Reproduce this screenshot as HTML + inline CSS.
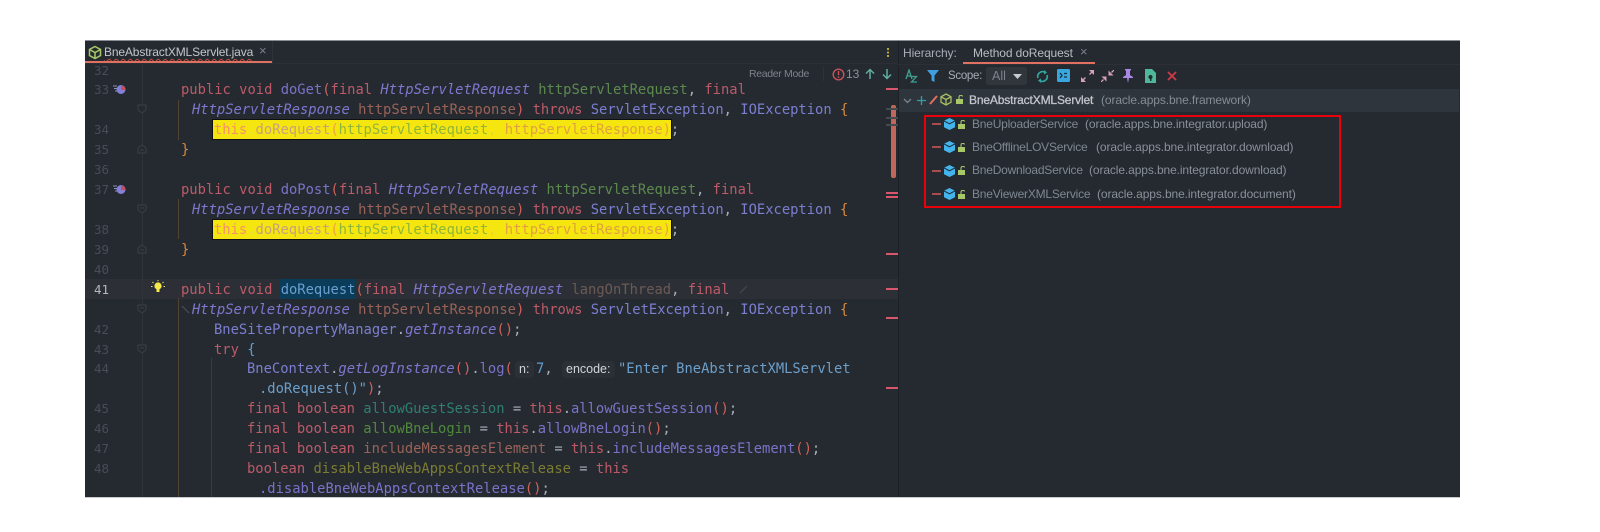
<!DOCTYPE html>
<html><head><meta charset="utf-8"><style>
html,body{margin:0;padding:0;background:#fff}
body{width:1600px;height:532px;position:relative;overflow:hidden}
#app{position:absolute;left:85px;top:41px;width:1375px;height:456px;background:#252a30;overflow:hidden}
#wrap{position:absolute;left:0;top:0;width:1600px;height:532px}
.a{position:absolute}
.c{position:absolute;white-space:pre;font:13.8px/20px "DejaVu Sans Mono","Liberation Mono",monospace;height:20px;color:#8b93a0}
.n{position:absolute;left:85px;width:24px;text-align:right;font:12.5px/20px "DejaVu Sans Mono",monospace;color:#474d57;height:20px}
.u{position:absolute;white-space:pre;font:12px/20px "Liberation Sans",sans-serif;height:20px}
.k{color:#bd5a68}.m{color:#7a72c8}.t{color:#7d77cf;font-style:italic}.p{color:#d2605a}.g{color:#5c8a4e}.r{color:#9a6258}
.w{color:#aab0ba}.b{color:#d88a3c}.y{color:#7c7ed0}.s{color:#6c9fca}.q{color:#5d9ed2}
.mk{position:absolute;left:886px;width:12px;height:2px;background:#d9566c}
.mg{position:absolute;left:886px;width:12px;height:2px;background:#414b50}
.tr{position:absolute;white-space:pre;font:12px/20px "Liberation Sans",sans-serif;height:20px;color:#8a909a;letter-spacing:-.11px}
.nm{color:#7f8791;letter-spacing:-.22px}
</style></head><body>
<div id="wrap">
<div class="a" style="left:85px;top:40px;width:1375px;height:1px;background:#8a8e94"></div>
<div class="a" style="left:85px;top:497px;width:1375px;height:1px;background:#c8cacd"></div>
<div class="a" style="left:1459px;top:41px;width:1px;height:456px;background:#4a5058"></div>
<div id="app"></div>

<!-- highlighted current line -->
<div class="a" style="left:85px;top:279px;width:813px;height:20px;background:#2c3036"></div>
<!-- gutter guides -->
<div class="a" style="left:142px;top:64px;width:1px;height:433px;background:#2f343b"></div>
<div class="a" style="left:178px;top:100px;width:1px;height:40px;background:#51432f"></div>
<div class="a" style="left:178px;top:199px;width:1px;height:40px;background:#51432f"></div>
<div class="a" style="left:178px;top:298px;width:1px;height:199px;background:#51432f"></div>
<div class="a" style="left:211px;top:358px;width:1px;height:139px;background:#323e4a"></div>

<!-- tab strip -->
<svg class="a" style="left:88px;top:45px" width="14" height="15" viewBox="0 0 14 15"><path d="M7 1.500l5.500 3v6L7 13.500l-5.500-3v-6zM1.500 4.500L7 7.500l5.500-3M7 7.500v6" fill="none" stroke="#a8c868" stroke-width="1.500"/></svg>
<div class="u" style="left:104px;top:42px;color:#c2c6cc;letter-spacing:-.14px;text-decoration:underline wavy #c0503f 1px;text-underline-offset:2px">BneAbstractXMLServlet.java</div>
<div class="u" style="left:259px;top:41px;color:#7c828b;font-size:13px">×</div>
<div class="a" style="left:85px;top:61px;width:188px;height:2px;background:#e0705f"></div>
<div class="a" style="left:272px;top:41px;width:1px;height:22px;background:#2f343b"></div>
<div class="a" style="left:85px;top:63px;width:813px;height:1px;background:#2c3036"></div>

<!-- reader mode bar -->
<div class="u" style="left:749px;top:64px;color:#7d838c;font-size:10.500px;letter-spacing:-.33px">Reader Mode</div>
<div class="a" style="left:823px;top:67px;width:1px;height:14px;background:#2f343b"></div>
<svg class="a" style="left:832px;top:68px" width="13" height="13" viewBox="0 0 13 13"><circle cx="6.500" cy="6.500" r="5.300" fill="none" stroke="#c8525a" stroke-width="1.400"/><path d="M6.500 3v4.200M6.500 8.500v1.500" stroke="#c8525a" stroke-width="1.400"/></svg>
<div class="u" style="left:846px;top:64px;color:#8b929b">13</div>
<svg class="a" style="left:864px;top:68px" width="12" height="12" viewBox="0 0 12 12"><path d="M6 11V2M2 5.500L6 1.500l4 4" fill="none" stroke="#5fae9e" stroke-width="1.500"/></svg>
<svg class="a" style="left:881px;top:68px" width="12" height="12" viewBox="0 0 12 12"><path d="M6 1v9M2 6.500L6 10.500l4-4" fill="none" stroke="#5fae9e" stroke-width="1.500"/></svg>

<!-- line numbers -->
<div class="n" style="top:61px">32</div>
<div class="n" style="top:80px">33</div>
<div class="n" style="top:120px">34</div>
<div class="n" style="top:140px">35</div>
<div class="n" style="top:160px">36</div>
<div class="n" style="top:180px">37</div>
<div class="n" style="top:220px">38</div>
<div class="n" style="top:240px">39</div>
<div class="n" style="top:260px">40</div>
<div class="n" style="top:280px;color:#b4b8be">41</div>
<div class="n" style="top:320px">42</div>
<div class="n" style="top:340px">43</div>
<div class="n" style="top:359px">44</div>
<div class="n" style="top:399px">45</div>
<div class="n" style="top:419px">46</div>
<div class="n" style="top:439px">47</div>
<div class="n" style="top:459px">48</div>

<!-- gutter icons -->
<svg class="a" style="left:113px;top:83px" width="13" height="12" viewBox="0 0 13 12"><path d="M0 3h4M1 5.500h3M2 8h2" stroke="#8a92c0" stroke-width="1"/><circle cx="8" cy="6.500" r="4.500" fill="#8480d8"/><path d="M8 2l4 2.500V7H8z" fill="#c8505c"/></svg>
<svg class="a" style="left:113px;top:183px" width="13" height="12" viewBox="0 0 13 12"><path d="M0 3h4M1 5.500h3M2 8h2" stroke="#8a92c0" stroke-width="1"/><circle cx="8" cy="6.500" r="4.500" fill="#8480d8"/><path d="M8 2l4 2.500V7H8z" fill="#c8505c"/></svg>
<svg class="a" style="left:151px;top:280px" width="14" height="15" viewBox="0 0 14 15"><circle cx="7" cy="6" r="3.600" fill="#f7e84a"/><rect x="5.500" y="9" width="3" height="3" fill="#f7e84a"/><path d="M7 0v1.300M1.500 2l1 1M12.500 2l-1 1M0 6.500h1.500M12.500 6.500H14" stroke="#e8dc60" stroke-width="1"/></svg>
<!-- fold marks -->
<svg class="a" style="left:137px;top:104px" width="10" height="10"><path d="M1 1h8v5l-4 3-4-3z" fill="#252a30" stroke="#3a3f46"/></svg>
<svg class="a" style="left:137px;top:144px" width="10" height="10"><path d="M1 9h8V4L5 1 1 4z" fill="#252a30" stroke="#3a3f46"/><path d="M3 6h4" stroke="#3a3f46"/></svg>
<svg class="a" style="left:137px;top:204px" width="10" height="10"><path d="M1 1h8v5l-4 3-4-3z" fill="#252a30" stroke="#3a3f46"/><path d="M3 4h4" stroke="#3a3f46"/></svg>
<svg class="a" style="left:137px;top:244px" width="10" height="10"><path d="M1 9h8V4L5 1 1 4z" fill="#252a30" stroke="#3a3f46"/><path d="M3 6h4" stroke="#3a3f46"/></svg>
<svg class="a" style="left:137px;top:304px" width="10" height="10"><path d="M1 1h8v5l-4 3-4-3z" fill="#252a30" stroke="#3a3f46"/><path d="M3 4h4" stroke="#3a3f46"/></svg>
<svg class="a" style="left:137px;top:344px" width="10" height="10"><path d="M1 1h8v5l-4 3-4-3z" fill="#252a30" stroke="#3a3f46"/><path d="M3 4h4" stroke="#3a3f46"/></svg>

<!-- highlights -->
<div class="a" style="left:213px;top:120px;width:458px;height:19px;background:#f6e60f;box-shadow:0 0 0 1px #111"></div>
<div class="a" style="left:213px;top:220px;width:458px;height:19px;background:#f6e60f;box-shadow:0 0 0 1px #111"></div>
<div class="a" style="left:280px;top:279px;width:75px;height:20px;background:#0b3c5a"></div>

<!-- code -->
<div class="c" style="left:181px;top:80px"><span class="k">public void </span><span class="m">doGet</span><span class="p">(</span><span class="k">final </span><span class="t">HttpServletRequest </span><span class="g">httpServletRequest</span><span class="w">, </span><span class="k">final</span></div>
<div class="c" style="left:192px;top:100px"><span class="t">HttpServletResponse </span><span class="r">httpServletResponse</span><span class="p">) </span><span class="k">throws </span><span class="y">ServletException</span><span class="w">, </span><span class="y">IOException </span><span class="b">{</span></div>
<div class="c" style="left:214px;top:120px"><span style="color:#f7906a">this</span><span style="color:#e8d860">.</span><span style="color:#c8a080">doRequest</span><span style="color:#f0a040">(</span><span style="color:#8fb53a">httpServletRequest</span><span style="color:#e8d820">, </span><span style="color:#e0a040">httpServletResponse</span><span style="color:#f0a040">)</span><span class="w">;</span></div>
<div class="c" style="left:181px;top:140px"><span class="b">}</span></div>

<div class="c" style="left:181px;top:180px"><span class="k">public void </span><span class="m">doPost</span><span class="p">(</span><span class="k">final </span><span class="t">HttpServletRequest </span><span class="g">httpServletRequest</span><span class="w">, </span><span class="k">final</span></div>
<div class="c" style="left:192px;top:200px"><span class="t">HttpServletResponse </span><span class="r">httpServletResponse</span><span class="p">) </span><span class="k">throws </span><span class="y">ServletException</span><span class="w">, </span><span class="y">IOException </span><span class="b">{</span></div>
<div class="c" style="left:214px;top:220px"><span style="color:#f7906a">this</span><span style="color:#e8d860">.</span><span style="color:#c8a080">doRequest</span><span style="color:#f0a040">(</span><span style="color:#8fb53a">httpServletRequest</span><span style="color:#e8d820">, </span><span style="color:#e0a040">httpServletResponse</span><span style="color:#f0a040">)</span><span class="w">;</span></div>
<div class="c" style="left:181px;top:240px"><span class="b">}</span></div>

<div class="c" style="left:181px;top:280px"><span class="k">public void </span><span style="color:#6a9fd0">doRequest</span><span class="p">(</span><span class="k">final </span><span class="t">HttpServletRequest </span><span style="color:#6b5a55">langOnThread</span><span class="w">, </span><span class="k">final</span></div>
<svg class="a" style="left:738px;top:283px" width="12" height="12"><path d="M2 10L9 3" stroke="#3f444b" stroke-width="1.500"/></svg>
<svg class="a" style="left:181px;top:304px" width="10" height="10"><path d="M1 2l7 7" stroke="#4a4f56" stroke-width="1.200"/></svg>
<div class="c" style="left:192px;top:300px"><span class="t">HttpServletResponse </span><span class="r">httpServletResponse</span><span class="p">) </span><span class="k">throws </span><span class="y">ServletException</span><span class="w">, </span><span class="y">IOException </span><span class="b">{</span></div>
<div class="c" style="left:214px;top:320px"><span class="y">BneSitePropertyManager</span><span class="w">.</span><span class="t">getInstance</span><span class="p">()</span><span class="w">;</span></div>
<div class="c" style="left:214px;top:340px"><span class="k">try </span><span class="q">{</span></div>
<div class="c" style="left:247px;top:359px"><span class="y">BneContext</span><span class="w">.</span><span class="t">getLogInstance</span><span class="p">()</span><span class="w">.</span><span class="m">log</span><span class="p">(</span></div>
<div class="a" style="left:515px;top:361px;width:19px;height:17px;background:#2b2f36;border-radius:4px"></div>
<div class="u" style="left:519px;top:359px;color:#d0d4da;font-size:12.500px">n:</div>
<div class="c" style="left:536px;top:359px"><span class="q">7</span><span class="w">,</span></div>
<div class="a" style="left:562px;top:361px;width:53px;height:17px;background:#2b2f36;border-radius:4px"></div>
<div class="u" style="left:566px;top:359px;color:#d0d4da;font-size:12.500px">encode:</div>
<div class="c" style="left:618px;top:359px"><span class="s">"Enter BneAbstractXMLServlet</span></div>
<div class="c" style="left:259px;top:379px"><span class="s">.doRequest()"</span><span class="p">)</span><span class="w">;</span></div>
<div class="c" style="left:247px;top:399px"><span class="k">final boolean </span><span style="color:#2f7f70">allowGuestSession </span><span class="w">= </span><span class="k">this</span><span class="w">.</span><span class="m">allowGuestSession</span><span class="p">()</span><span class="w">;</span></div>
<div class="c" style="left:247px;top:419px"><span class="k">final boolean </span><span style="color:#4f8a3c">allowBneLogin </span><span class="w">= </span><span class="k">this</span><span class="w">.</span><span class="m">allowBneLogin</span><span class="p">()</span><span class="w">;</span></div>
<div class="c" style="left:247px;top:439px"><span class="k">final boolean </span><span class="r">includeMessagesElement </span><span class="w">= </span><span class="k">this</span><span class="w">.</span><span class="m">includeMessagesElement</span><span class="p">()</span><span class="w">;</span></div>
<div class="c" style="left:247px;top:459px"><span class="k">boolean </span><span style="color:#7c7c32">disableBneWebAppsContextRelease </span><span class="w">= </span><span class="k">this</span></div>
<div class="c" style="left:259px;top:479px"><span class="m">.disableBneWebAppsContextRelease</span><span class="p">()</span><span class="w">;</span></div>

<!-- scrollbar markers -->
<div class="a" style="left:891px;top:105px;width:5px;height:73px;background:#c0675c;border-radius:2px"></div>
<div class="mk" style="top:88px"></div>
<div class="mg" style="top:108px"></div>
<div class="mg" style="top:117px"></div>
<div class="mg" style="top:124px"></div>
<div class="mk" style="top:192px"></div>
<div class="mk" style="top:196px"></div>
<div class="mk" style="top:253px"></div>
<div class="mk" style="top:288px"></div>
<div class="mk" style="top:317px"></div>
<div class="mk" style="top:387px"></div>

<!-- right panel -->
<div class="a" style="left:898px;top:41px;width:1px;height:456px;background:#1d2126"></div>
<div class="a" style="left:898px;top:64px;width:562px;height:1px;background:#2c3036"></div>
<div class="a" style="left:887px;top:48px;width:2px;height:2px;background:#b8a838;box-shadow:0 3.500px #b8a838,0 7px #b8a838"></div>
<div class="u" style="left:903px;top:43px;color:#a8adb5;letter-spacing:-.1px">Hierarchy:</div>
<div class="u" style="left:973px;top:43px;color:#b8bcc3;letter-spacing:-.1px">Method doRequest</div>
<div class="u" style="left:1080px;top:42px;color:#7c828b;font-size:13px">×</div>
<div class="a" style="left:963px;top:62px;width:132px;height:2px;background:#e0705f"></div>

<!-- toolbar -->
<svg class="a" style="left:905px;top:69px" width="13" height="14" viewBox="0 0 13 14"><path d="M1 10L4 1l3 9M2.200 7h3.600" fill="none" stroke="#3f9f90" stroke-width="1.300"/><path d="M6.500 7.500h5l-5 5.500h5.500" fill="none" stroke="#3f9f90" stroke-width="1.300"/></svg>
<svg class="a" style="left:927px;top:70px" width="12" height="12" viewBox="0 0 12 12"><path d="M0 0h12L7.500 5.500V12l-3-1.500v-5z" fill="#3f9fe0"/></svg>
<div class="u" style="left:948px;top:66px;color:#a8adb5;font-size:11.500px;letter-spacing:-.3px">Scope:</div>
<div class="a" style="left:986px;top:67px;width:41px;height:18px;background:#31363d;border-radius:3px"></div>
<div class="u" style="left:992px;top:66px;color:#7d838c;font-size:12.500px">All</div>
<svg class="a" style="left:1013px;top:74px" width="9" height="5"><path d="M0 0h9L4.500 5z" fill="#c8ccd2"/></svg>
<svg class="a" style="left:1036px;top:70px" width="13" height="13" viewBox="0 0 13 13"><path d="M2 8A4.800 4.800 0 0 1 9 2.300M11 5a4.800 4.800 0 0 1-7 5.700" fill="none" stroke="#30a8a0" stroke-width="1.600"/><path d="M8 0l3 2.500-3 2zM5 13l-3-2.500 3-2z" fill="#30a8a0"/></svg>
<svg class="a" style="left:1057px;top:69px" width="13" height="13"><rect width="13" height="13" rx="1.500" fill="#3aa6e0"/><path d="M3 4l2 2.500L3 9M7 4.500h3M7 8h3" stroke="#12303f" stroke-width="1.300" fill="none"/></svg>
<svg class="a" style="left:1081px;top:70px" width="13" height="12" viewBox="0 0 13 12"><path d="M0 12V7l5 5zM13 0v5L8 0z" fill="#d8a0b8"/><path d="M2 10L4.500 7.500M8.500 4.500L11 2" stroke="#d8a0b8" stroke-width="1.300"/></svg>
<svg class="a" style="left:1101px;top:70px" width="13" height="12" viewBox="0 0 13 12"><path d="M5.500 6.500v5l-5-5zM7.500 5.500v-5l5 5z" fill="#d8a0b8"/><path d="M0 12L2.500 9.500M10.500 2.500L13 0" stroke="#d8a0b8" stroke-width="1.300"/></svg>
<svg class="a" style="left:1123px;top:69px" width="10" height="14" viewBox="0 0 10 14"><path d="M2 0h6v1L7 2v4l3 2v1H6l-1 5-1-5H0V8l3-2V2L2 1z" fill="#a888e0"/></svg>
<svg class="a" style="left:1145px;top:69px" width="11" height="14" viewBox="0 0 11 14"><path d="M0 0h7l4 4v10H0z" fill="#4fb898"/><circle cx="5.500" cy="8" r="2" fill="#252a30"/><rect x="5" y="8" width="1.500" height="4" fill="#252a30"/></svg>
<svg class="a" style="left:1167px;top:71px" width="10" height="10"><path d="M1 1l8 8M9 1l-8 8" stroke="#d03a48" stroke-width="1.800"/></svg>

<!-- tree -->
<div class="a" style="left:899px;top:89px;width:560px;height:23px;background:#2f353c"></div>
<svg class="a" style="left:903px;top:98px" width="9" height="6"><path d="M1 1l3.500 3.500L8 1" fill="none" stroke="#7d838c" stroke-width="1.300"/></svg>
<svg class="a" style="left:917px;top:96px" width="9" height="9"><path d="M4.500 0v9M0 4.500h9" stroke="#30a0a8" stroke-width="1.300"/></svg>
<svg class="a" style="left:929px;top:95px" width="9" height="10"><path d="M1 9L8 1" stroke="#e0705f" stroke-width="2"/></svg>
<svg class="a" style="left:940px;top:93px" width="12" height="13" viewBox="0 0 12 13"><path d="M6 1l5 2.800v5.400L6 12 1 9.200V3.800zM1 3.800L6 6.500l5-2.700M6 6.500V12" fill="none" stroke="#a8c060" stroke-width="1.300"/></svg>
<svg class="a" style="left:956px;top:95px" width="9" height="9"><rect y="4" width="7" height="5" fill="#a8c868"/><path d="M3 4V2a1.800 1.800 0 0 1 3.500-.5" fill="none" stroke="#a8c868" stroke-width="1.100"/></svg>
<div class="tr" style="left:969px;top:90px;color:#c2c6cc;letter-spacing:-.15px;-webkit-text-stroke:.3px #c2c6cc">BneAbstractXMLServlet</div>
<div class="tr" style="left:1101px;top:90px;color:#868c96">(oracle.apps.bne.framework)</div>

<!-- rows -->
<div class="a" style="left:932px;top:123px;width:9px;height:2px;background:#a84c50"></div>
<svg class="a" style="left:944px;top:118px" width="11" height="12" viewBox="0 0 11 12"><path d="M5.500 0L11 2.800v6.400L5.500 12 0 9.200V2.800z" fill="#43b4ec"/><path d="M0 3l5.500 2.800L11 3" fill="none" stroke="#1c2a34" stroke-width="1"/></svg>
<svg class="a" style="left:958px;top:120px" width="9" height="9"><rect y="4" width="7" height="5" fill="#a8c868"/><path d="M3 4V2a1.800 1.800 0 0 1 3.500-.5" fill="none" stroke="#a8c868" stroke-width="1.100"/></svg>
<div class="tr" style="left:972px;top:114px"><span class="nm">BneUploaderService</span></div>
<div class="tr" style="left:1085px;top:114px">(oracle.apps.bne.integrator.upload)</div>

<div class="a" style="left:932px;top:146px;width:9px;height:2px;background:#a84c50"></div>
<svg class="a" style="left:944px;top:141px" width="11" height="12" viewBox="0 0 11 12"><path d="M5.500 0L11 2.800v6.400L5.500 12 0 9.200V2.800z" fill="#43b4ec"/><path d="M0 3l5.500 2.800L11 3" fill="none" stroke="#1c2a34" stroke-width="1"/></svg>
<svg class="a" style="left:958px;top:143px" width="9" height="9"><rect y="4" width="7" height="5" fill="#a8c868"/><path d="M3 4V2a1.800 1.800 0 0 1 3.500-.5" fill="none" stroke="#a8c868" stroke-width="1.100"/></svg>
<div class="tr" style="left:972px;top:137px"><span class="nm">BneOfflineLOVService</span></div>
<div class="tr" style="left:1096px;top:137px">(oracle.apps.bne.integrator.download)</div>

<div class="a" style="left:932px;top:170px;width:9px;height:2px;background:#a84c50"></div>
<svg class="a" style="left:944px;top:165px" width="11" height="12" viewBox="0 0 11 12"><path d="M5.500 0L11 2.800v6.400L5.500 12 0 9.200V2.800z" fill="#43b4ec"/><path d="M0 3l5.500 2.800L11 3" fill="none" stroke="#1c2a34" stroke-width="1"/></svg>
<svg class="a" style="left:958px;top:166px" width="9" height="9"><rect y="4" width="7" height="5" fill="#a8c868"/><path d="M3 4V2a1.800 1.800 0 0 1 3.500-.5" fill="none" stroke="#a8c868" stroke-width="1.100"/></svg>
<div class="tr" style="left:972px;top:160px"><span class="nm">BneDownloadService</span></div>
<div class="tr" style="left:1089px;top:160px">(oracle.apps.bne.integrator.download)</div>

<div class="a" style="left:932px;top:193px;width:9px;height:2px;background:#a84c50"></div>
<svg class="a" style="left:944px;top:188px" width="11" height="12" viewBox="0 0 11 12"><path d="M5.500 0L11 2.800v6.400L5.500 12 0 9.200V2.800z" fill="#43b4ec"/><path d="M0 3l5.500 2.800L11 3" fill="none" stroke="#1c2a34" stroke-width="1"/></svg>
<svg class="a" style="left:958px;top:190px" width="9" height="9"><rect y="4" width="7" height="5" fill="#a8c868"/><path d="M3 4V2a1.800 1.800 0 0 1 3.500-.5" fill="none" stroke="#a8c868" stroke-width="1.100"/></svg>
<div class="tr" style="left:972px;top:184px"><span class="nm">BneViewerXMLService</span></div>
<div class="tr" style="left:1097px;top:184px">(oracle.apps.bne.integrator.document)</div>

<!-- red box -->
<div class="a" style="left:924px;top:115px;width:413px;height:89px;border:2px solid #e8000b;box-sizing:content-box"></div>
</div>
</body></html>
